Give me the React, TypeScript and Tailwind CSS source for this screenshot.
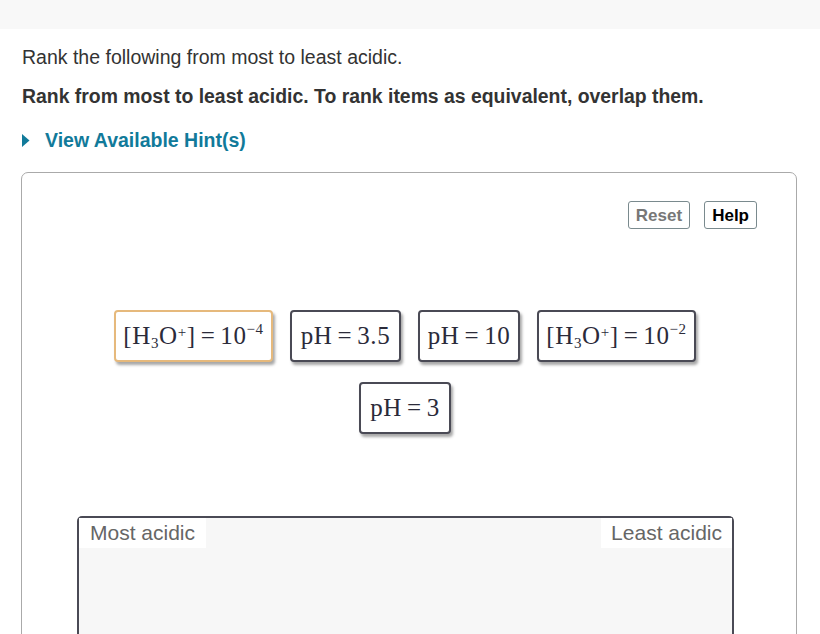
import React from "react";

const serif = { fontFamily: '"Liberation Serif", "Times New Roman", serif' };

function Tile({ children, w, selected }: { children: React.ReactNode; w: string; selected?: boolean }) {
  return (
    <div
      className={`${w} h-[52px] flex items-center justify-center bg-white rounded-[4px] border-2 text-[25px] tracking-[0.6px] text-[#2b2b3a] whitespace-nowrap shadow-[2px_3px_3px_rgba(0,0,0,0.35)] ${
        selected ? "border-[#e6b97c]" : "border-[#4a4a55]"
      }`}
      style={serif}
    >
      {children}
    </div>
  );
}

function H3O() {
  return (
    <span className="whitespace-nowrap">
      [H<sub className="text-[15px]">3</sub>O<sup className="text-[15px]">+</sup>]
    </span>
  );
}

export default function App() {
  return (
    <div className="w-[820px] h-[634px] overflow-hidden bg-white" style={{ fontFamily: '"Liberation Sans", Arial, sans-serif' }}>
      <div className="h-[29px] bg-[#f8f8f8]" />
      <div className="pl-[22px] pt-[17px]">
        <p className="text-[19.5px] text-[#333] leading-[22px]">Rank the following from most to least acidic.</p>
        <p className="mt-[17px] text-[19.4px] font-bold text-[#333] leading-[22px]">
          Rank from most to least acidic. To rank items as equivalent, overlap them.
        </p>
        <div className="mt-[22px] flex items-center text-[#117a9a] font-bold text-[19.5px] leading-[22px]">
          <svg width="8" height="13" viewBox="0 0 8 13" className="mr-[15px]">
            <path d="M0 0 L7.5 6.5 L0 13 Z" fill="#117a9a" />
          </svg>
          <span>View Available Hint(s)</span>
        </div>
      </div>
      <div className="ml-[21px] mr-[23px] mt-[21px] h-[500px] border border-[#aaa] rounded-[7px]">
        <div className="flex justify-end gap-[14px] pr-[39px] pt-[28px]">
          <button className="h-[28px] px-[7px] border border-[#7a8a8e] rounded-[3px] text-[17px] font-bold text-[#777] leading-none">
            Reset
          </button>
          <button className="h-[28px] px-[7px] border border-[#7a8a8e] rounded-[3px] text-[17px] font-bold text-black leading-none">
            Help
          </button>
        </div>
        <div className="mt-[81px] flex flex-wrap justify-center gap-x-[17px] gap-y-[20px] w-[600px] ml-[83px]">
          <Tile w="w-[159px]" selected>
            <H3O />
            <span className="mx-[5px]">=</span>10<sup className="text-[15px]">−4</sup>
          </Tile>
          <Tile w="w-[111px]">
            pH<span className="mx-[5px]">=</span>3.5
          </Tile>
          <Tile w="w-[102px]">
            pH<span className="mx-[5px]">=</span>10
          </Tile>
          <Tile w="w-[159px]">
            <H3O />
            <span className="mx-[5px]">=</span>10<sup className="text-[15px]">−2</sup>
          </Tile>
          <Tile w="w-[92px]">
            pH<span className="mx-[5px]">=</span>3
          </Tile>
        </div>
        <div className="mt-[82px] ml-[55px] w-[657px] h-[200px] border-2 border-b-0 border-[#4a4a55] rounded-t-[5px] bg-[#f7f7f7] flex justify-between">
          <div className="bg-white h-[30px] px-[11px] flex items-center text-[21px] text-[#666]">Most acidic</div>
          <div className="bg-white h-[30px] px-[10px] flex items-center text-[21px] text-[#666]">Least acidic</div>
        </div>
      </div>
    </div>
  );
}
